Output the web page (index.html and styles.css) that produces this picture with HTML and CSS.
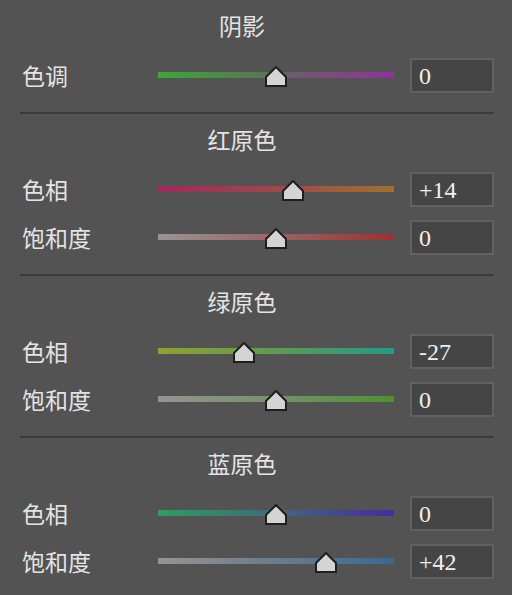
FILE: index.html
```html
<!DOCTYPE html>
<html lang="zh">
<head>
<meta charset="utf-8">
<link rel="stylesheet" href="styles.css">
</head>
<body>
<div class="panel">
  <section class="group">
    <div class="title">阴影</div>
    <div class="row">
      <span class="label">色调</span>
      <div class="slider tone"><svg class="thumb" style="left:50%" width="22" height="21" viewBox="0 0 22 21"><polygon points="11,1 21,11 21,20 1,20 1,11"/></svg></div>
      <div class="value">0</div>
    </div>
  </section>
  <section class="group">
    <div class="title">红原色</div>
    <div class="row">
      <span class="label">色相</span>
      <div class="slider red-hue"><svg class="thumb" style="left:57%" width="22" height="21" viewBox="0 0 22 21"><polygon points="11,1 21,11 21,20 1,20 1,11"/></svg></div>
      <div class="value">+14</div>
    </div>
    <div class="row">
      <span class="label">饱和度</span>
      <div class="slider red-sat"><svg class="thumb" style="left:50%" width="22" height="21" viewBox="0 0 22 21"><polygon points="11,1 21,11 21,20 1,20 1,11"/></svg></div>
      <div class="value">0</div>
    </div>
  </section>
  <section class="group">
    <div class="title">绿原色</div>
    <div class="row">
      <span class="label">色相</span>
      <div class="slider green-hue"><svg class="thumb" style="left:36.5%" width="22" height="21" viewBox="0 0 22 21"><polygon points="11,1 21,11 21,20 1,20 1,11"/></svg></div>
      <div class="value">-27</div>
    </div>
    <div class="row">
      <span class="label">饱和度</span>
      <div class="slider green-sat"><svg class="thumb" style="left:50%" width="22" height="21" viewBox="0 0 22 21"><polygon points="11,1 21,11 21,20 1,20 1,11"/></svg></div>
      <div class="value">0</div>
    </div>
  </section>
  <section class="group last">
    <div class="title">蓝原色</div>
    <div class="row">
      <span class="label">色相</span>
      <div class="slider blue-hue"><svg class="thumb" style="left:50%" width="22" height="21" viewBox="0 0 22 21"><polygon points="11,1 21,11 21,20 1,20 1,11"/></svg></div>
      <div class="value">0</div>
    </div>
    <div class="row">
      <span class="label">饱和度</span>
      <div class="slider blue-sat"><svg class="thumb" style="left:71%" width="22" height="21" viewBox="0 0 22 21"><polygon points="11,1 21,11 21,20 1,20 1,11"/></svg></div>
      <div class="value">+42</div>
    </div>
  </section>
</div>
</body>
</html>
```

FILE: styles.css
```css
html, body {
  margin: 0;
  padding: 0;
  background: #535353;
  width: 512px;
  height: 595px;
  overflow: hidden;
}

.panel {
  padding-left: 20px;
  width: 474px;
  font-family: "Noto Sans CJK SC", sans-serif;
  color: #e4e4e4;
}

.group {
  border-bottom: 2px solid #3b3b3b;
  padding-bottom: 13px;
}

.group.last {
  border-bottom: none;
}

.title {
  height: 51px;
  line-height: 51px;
  font-size: 23px;
  text-align: center;
  padding-right: 30px;
}

.row {
  display: grid;
  grid-template-columns: 138px 236px 100px;
  align-items: center;
  height: 48px;
}

.label {
  font-size: 23px;
  line-height: 1;
  padding-left: 2px;
}

.slider {
  position: relative;
  height: 6px;
}

.thumb {
  position: absolute;
  top: -6px;
  margin-left: -11px;
  display: block;
}

.thumb polygon {
  fill: #d4d4d4;
  stroke: #1f1f1f;
  stroke-width: 2;
  stroke-linejoin: miter;
}

.value {
  box-sizing: border-box;
  margin-left: 16px;
  height: 35px;
  border: 2px solid #616161;
  background: #454545;
  padding-left: 7px;
  font-family: "Liberation Serif", serif;
  font-size: 24px;
  line-height: 32px;
  color: #f0f0f0;
}

.tone { background: linear-gradient(to right, #3aa836, #5a7459 46%, #6c5d6c 54%, #8f3399); }
.red-hue { background: linear-gradient(to right, #a0295f, #a0474b 50%, #a0712c); }
.red-sat { background: linear-gradient(to right, #9a9494, #9a6464 50%, #a0302f); }
.green-hue { background: linear-gradient(to right, #8fa22e, #5f9a52 50%, #229a8a); }
.green-sat { background: linear-gradient(to right, #959490, #74926a 50%, #4e9130); }
.blue-hue { background: linear-gradient(to right, #2d9d5f, #3d6a7e 50%, #4a2a9e); }
.blue-sat { background: linear-gradient(to right, #979393, #6a7c8c 50%, #386994); }
```
